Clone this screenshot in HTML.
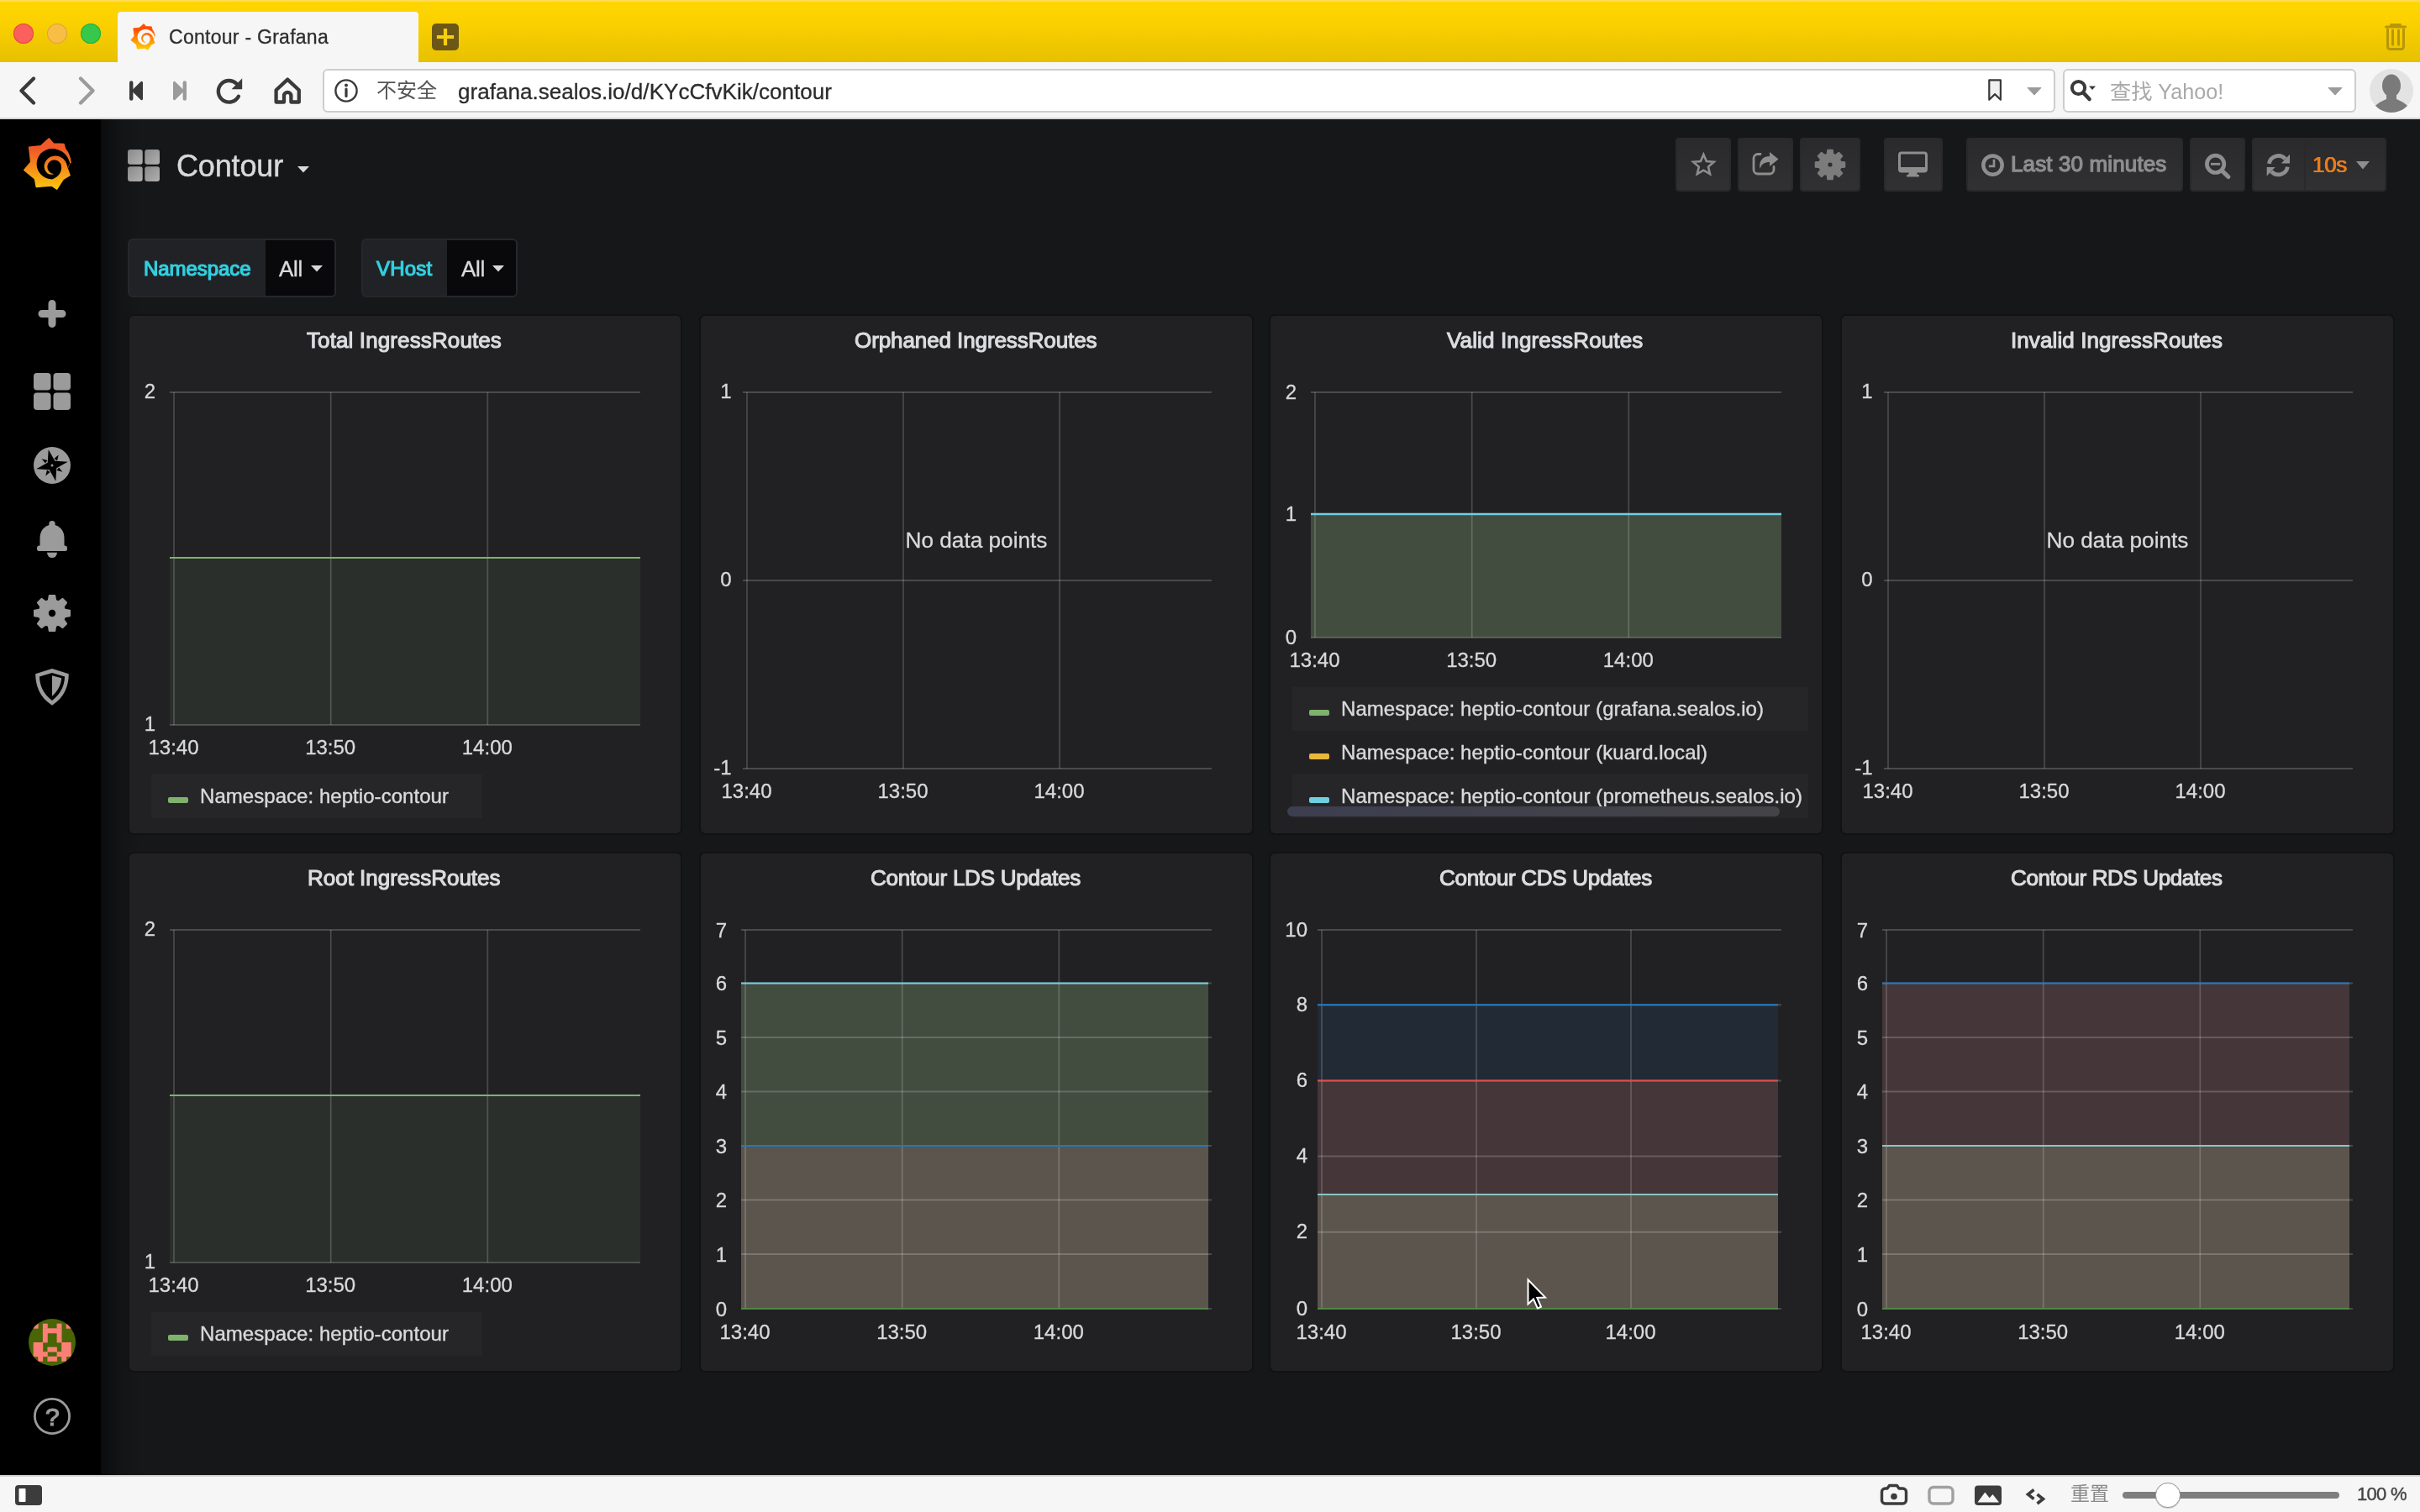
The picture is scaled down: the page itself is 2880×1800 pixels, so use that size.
<!DOCTYPE html><html lang="en"><head><meta charset="utf-8"><meta name="viewport" content="width=2880"><title>Contour - Grafana</title><style>
*{box-sizing:border-box}
html,body{margin:0;padding:0}
body{width:2880px;height:1800px;overflow:hidden;background:#161719;font-family:"Liberation Sans","Noto Sans CJK SC",sans-serif;position:relative}
.t{position:absolute;line-height:1;white-space:pre;will-change:transform}
.abs{position:absolute}
#tabbar{position:absolute;left:0;top:0;width:2880px;height:74px;background:linear-gradient(#fedc5a 0px,#fedc5a 2px,#ffd501 2.5px,#fad000 28px,#f0c800 52px,#e7c000 74px)}
.tl{position:absolute;top:28px;width:24px;height:24px;border-radius:50%}
#tab{position:absolute;left:140px;top:14px;width:358px;height:60px;background:#f6f6f6;border-radius:4px 4px 0 0}
#newtab{position:absolute;left:514px;top:28px;width:32px;height:32px;border-radius:5px;background:#6d5716}
#toolbar{position:absolute;left:0;top:74px;width:2880px;height:68px;background:#f6f6f6;border-bottom:2px solid #d4d4d4}
.field{position:absolute;top:8px;height:52px;background:#fff;border:2px solid #cdcdcd;border-radius:6px}
#side{position:absolute;left:0;top:142px;width:120px;height:1614px;background:#000}
#main{position:absolute;left:120px;top:142px;width:2760px;height:1614px;background:linear-gradient(90deg,#0b0c0d 0px,#131416 24px,#161719 48px)}
#status{position:absolute;left:0;top:1756px;width:2880px;height:44px;background:#f6f6f6;border-top:2px solid #d2d2d2}
.nb{position:absolute;top:164px;height:64px;border-radius:4px;background:linear-gradient(#2a2a2c,#313133);border:2px solid #29292b}
.var{position:absolute;top:284px;height:70px;border:2px solid #26272b;border-radius:6px;background:#212226;overflow:hidden}
.var .val{position:absolute;top:0;right:0;height:66px;background:#09090b}
.panel{position:absolute;width:656px;height:616px;background:#212124;border-radius:5px;box-shadow:0 0 0 2px #121213}
.panel svg{position:absolute;left:0;top:0;will-change:transform}
.lg{position:absolute;background:#262628}
.sw{position:absolute;width:24px;height:7px;border-radius:2px}
svg text{font-family:"Liberation Sans",sans-serif;stroke:#d8d9da;stroke-width:0.3px}
</style></head><body>
<div id="tabbar">
<div class="tl" style="left:16px;background:#fc605c;box-shadow:inset 0 0 0 1px #e2463f"></div>
<div class="tl" style="left:56px;background:#f7bd45;box-shadow:inset 0 0 0 1px #e0a336"></div>
<div class="tl" style="left:96px;background:#35c84a;box-shadow:inset 0 0 0 1px #2bab3a"></div>
<div id="tab"></div>
<div id="newtab"><svg width="32" height="32" viewBox="0 0 32 32"><path d="M16 5.9v20.2M5.9 16h20.2" stroke="#f5cf12" stroke-width="4.2" fill="none"/></svg></div>
<svg class="abs" style="left:2836px;top:26px" width="30" height="36" viewBox="0 0 30 36"><g fill="none" stroke="#b8960a" stroke-width="3" stroke-linecap="round" stroke-linejoin="round"><path d="M3.5 6h23"/><path d="M9.5 3.5h11"/><path d="M5.5 9v20.5a3 3 0 0 0 3 3h13a3 3 0 0 0 3-3V9"/><path d="M11.5 10v17M18.5 10v17"/></g></svg>
</div>
<svg class="abs" style="left:154px;top:28px" width="32" height="32" viewBox="155 236 1041 1041"><defs><linearGradient id="g1" gradientUnits="userSpaceOnUse" x1="0" y1="330" x2="0" y2="1277"><stop offset="0.15" stop-color="#ff4e00"/><stop offset="1" stop-color="#ffd400"/></linearGradient></defs><path fill="url(#g1)" stroke="url(#g1)" stroke-width="24" stroke-linejoin="round" d="M312,425 L545,400 L712,250 L800,352 L1008,360 L1036,460 Q1130,570 1142,730 L1122,738 L1078,850 L1128,985 L995,1065 L868,1262 L762,1192 L458,1220 L428,1058 L214,880 L348,722 Z"/><circle cx="770" cy="760" r="306" fill="#f6f6f6"/><path fill="#f6f6f6" d="M760,455 Q1060,470 1130,745 L1075,860 L960,600 Z"/><path fill="url(#g1)" d="M1074,818 L1072,800 L1068,783 L1064,766 L1058,749 L1051,733 L1043,718 L1034,703 L1024,689 L1013,676 L1002,664 L989,652 L976,642 L963,633 L949,624 L934,617 L919,611 L904,606 L888,602 L873,599 L857,597 L841,597 L826,597 L810,599 L795,601 L780,604 L766,608 L751,613 L738,619 L725,626 L712,634 L700,643 L689,653 L678,663 L668,674 L659,685 L651,696 L643,709 L636,721 L630,734 L625,748 L621,762 L618,776 L616,790 L615,804 L615,818 L617,832 L620,846 L623,859 L628,872 L634,885 L640,897 L647,909 L655,920 L663,930 L673,940 L683,949 L694,955 L707,960 L720,964 L732,967 L745,968 L757,969 L769,969 L781,968 L792,965 L803,963 L813,959 L813,957 L799,956 L784,953 L770,949 L757,943 L744,936 L732,928 L721,918 L712,907 L703,896 L695,883 L689,870 L684,856 L681,842 L679,828 L679,813 L680,799 L683,784 L687,770 L693,757 L700,744 L708,732 L718,721 L729,712 L740,703 L753,695 L766,689 L780,684 L794,681 L808,679 L823,679 L837,680 L852,683 L866,687 L879,693 L892,700 L904,708 L915,718 L924,729 L933,740 L941,753 L947,766 L952,780 L955,794 L957,808Z"/><path fill="url(#g1)" d="M957,800 C966,900 935,1010 761,1073 L900,1062 L1095,905 L1074,790 Z"/></svg>
<span class="t" style="left:200.5px;top:33px;font-size:23px;color:#2d2d2d;-webkit-text-stroke:0.3px #2d2d2d;letter-spacing:0.271px;">Contour - Grafana</span>
<div id="toolbar">
<div class="field" style="left:384px;width:2062px"></div>
<div class="field" style="left:2455px;width:349px"></div>
<svg class="abs" style="left:0;top:0" width="2880" height="66" viewBox="0 74 2880 66">
<path d="M40 93.5 L25.5 108 L40 122.5" fill="none" stroke="#3a3a3a" stroke-width="4.4" stroke-linecap="round" stroke-linejoin="round"/>
<path d="M96 93.5 L110.5 108 L96 122.5" fill="none" stroke="#9b9b9b" stroke-width="4.4" stroke-linecap="round" stroke-linejoin="round"/>
<path d="M156.2 98.5v19" stroke="#3a3a3a" stroke-width="4.4" stroke-linecap="round" fill="none"/><path d="M168.5 98.3 L158.6 108 L168.5 117.7Z" fill="#3a3a3a" stroke="#3a3a3a" stroke-width="3" stroke-linejoin="round"/>
<path d="M219.8 98.5v19" stroke="#9b9b9b" stroke-width="4.4" stroke-linecap="round" fill="none"/><path d="M207.5 98.3 L217.4 108 L207.5 117.7Z" fill="#9b9b9b" stroke="#9b9b9b" stroke-width="3" stroke-linejoin="round"/>
<path d="M281.2 99.3 A12.8 12.8 0 1 0 283.9 114.8" fill="none" stroke="#3a3a3a" stroke-width="4.4" stroke-linecap="round"/><path d="M288.2 93.2 V106.3 H275.6z" fill="#3a3a3a"/>
<path d="M328.6 121.5 V107.3 L342.2 94.6 L355.8 107.3 V121.5 H346.4 V114 a4.2 4.2 0 0 0 -8.4 0 V121.5 Z" fill="none" stroke="#3a3a3a" stroke-width="4.3" stroke-linejoin="round"/>
<circle cx="412" cy="108" r="12.6" fill="none" stroke="#3a3a3a" stroke-width="2.4"/><circle cx="412" cy="101.6" r="2" fill="#3a3a3a"/><path d="M412 106v8.5" stroke="#3a3a3a" stroke-width="3.2" stroke-linecap="round"/>
<path d="M2367.3 95.3 h13.6 v23.4 l-6.8 -6.6 l-6.8 6.6z" fill="#f0f0f0" stroke="#3a3a3a" stroke-width="2.2" stroke-linejoin="round"/>
<path d="M2413 104.5 h16 l-8 8.5z" fill="#9b9b9b" stroke="#9b9b9b" stroke-width="1" stroke-linejoin="round"/>
<path d="M2771 104.5 h16 l-8 8.5z" fill="#9b9b9b" stroke="#9b9b9b" stroke-width="1" stroke-linejoin="round"/>
<circle cx="2473.5" cy="104.5" r="7.6" fill="none" stroke="#3a3a3a" stroke-width="4"/><path d="M2479.5 110.5 L2486.5 118" stroke="#3a3a3a" stroke-width="4.6" stroke-linecap="round"/><path d="M2486 102.5h8l-4 4.5z" fill="#3a3a3a"/>
<circle cx="2846" cy="108" r="26" fill="#e3e3e3"/><clipPath id="avc"><circle cx="2846" cy="108" r="26"/></clipPath><g clip-path="url(#avc)" fill="#7a7a7a"><ellipse cx="2846" cy="102" rx="11" ry="13.5"/><path d="M2840 110h12v8h-12z"/><path d="M2822 136 c2 -12 12 -15 18 -18 h12 c6 3 16 6 18 18z"/></g>
</svg>
</div>
<span class="t cjk" style="left:448px;top:96px;font-size:24px;color:#555;">不安全</span>
<span class="t" style="left:545px;top:96px;font-size:26px;color:#2b2b2b;-webkit-text-stroke:0.3px #2b2b2b;letter-spacing:0.035px;">grafana.sealos.io/d/KYcCfvKik/contour</span>
<span class="t cjk" style="left:2511px;top:97.3px;font-size:25.2px;color:#a9a9a9;">查找 Yahoo!</span>
<div id="side"></div><div id="main"></div>
<svg class="abs" style="left:16px;top:150px" width="90" height="90" viewBox="0 0 1512 1512"><defs><linearGradient id="g2" gradientUnits="userSpaceOnUse" x1="0" y1="330" x2="0" y2="1277"><stop offset="0.15" stop-color="#f05a28"/><stop offset="1" stop-color="#fbca0a"/></linearGradient></defs><path fill="url(#g2)" stroke="url(#g2)" stroke-width="24" stroke-linejoin="round" d="M312,425 L545,400 L712,250 L800,352 L1008,360 L1036,460 Q1130,570 1142,730 L1122,738 L1078,850 L1128,985 L995,1065 L868,1262 L762,1192 L458,1220 L428,1058 L214,880 L348,722 Z"/><circle cx="770" cy="760" r="306" fill="#000"/><path fill="#000" d="M760,455 Q1060,470 1130,745 L1075,860 L960,600 Z"/><path fill="url(#g2)" d="M1074,818 L1072,800 L1068,783 L1064,766 L1058,749 L1051,733 L1043,718 L1034,703 L1024,689 L1013,676 L1002,664 L989,652 L976,642 L963,633 L949,624 L934,617 L919,611 L904,606 L888,602 L873,599 L857,597 L841,597 L826,597 L810,599 L795,601 L780,604 L766,608 L751,613 L738,619 L725,626 L712,634 L700,643 L689,653 L678,663 L668,674 L659,685 L651,696 L643,709 L636,721 L630,734 L625,748 L621,762 L618,776 L616,790 L615,804 L615,818 L617,832 L620,846 L623,859 L628,872 L634,885 L640,897 L647,909 L655,920 L663,930 L673,940 L683,949 L694,955 L707,960 L720,964 L732,967 L745,968 L757,969 L769,969 L781,968 L792,965 L803,963 L813,959 L813,957 L799,956 L784,953 L770,949 L757,943 L744,936 L732,928 L721,918 L712,907 L703,896 L695,883 L689,870 L684,856 L681,842 L679,828 L679,813 L680,799 L683,784 L687,770 L693,757 L700,744 L708,732 L718,721 L729,712 L740,703 L753,695 L766,689 L780,684 L794,681 L808,679 L823,679 L837,680 L852,683 L866,687 L879,693 L892,700 L904,708 L915,718 L924,729 L933,740 L941,753 L947,766 L952,780 L955,794 L957,808Z"/><path fill="url(#g2)" d="M957,800 C966,900 935,1010 761,1073 L900,1062 L1095,905 L1074,790 Z"/></svg>
<svg class="abs" style="left:0;top:340px" width="120" height="520" viewBox="0 340 120 520">
<path d="M62 361.5v24M50 373.5h24" stroke="#9b9b9b" stroke-width="9" stroke-linecap="round" fill="none"/>
<rect x="40" y="444" width="20.5" height="20.5" rx="4" fill="#9b9b9b"/>
<rect x="63.5" y="444" width="20.5" height="20.5" rx="4" fill="#9b9b9b"/>
<rect x="40" y="467.5" width="20.5" height="20.5" rx="4" fill="#9b9b9b"/>
<rect x="63.5" y="467.5" width="20.5" height="20.5" rx="4" fill="#9b9b9b"/>
<circle cx="62" cy="554" r="22" fill="#9b9b9b"/><path d="M57.7 535.2 L65.3 548.7 L80.8 549.7 L67.3 557.3 L66.3 572.8 L58.7 559.3 L43.2 558.3 L56.7 550.7Z M69.7 541.6 L64.4 546 L68.1 548.4Z M74.4 561.7 L70 556.4 L67.6 560.1Z M54.3 566.4 L59.6 562 L55.9 559.6Z M49.6 546.3 L54 551.6 L56.4 547.9Z" fill="#000"/><circle cx="62" cy="554" r="1.5" fill="#9b9b9b"/>
<circle cx="62" cy="623.7" r="3.7" fill="#9b9b9b"/><path d="M47.5 652 V641 C47.5 632 52 626 62 624.3 C72 626 76.5 632 76.5 641 V652Z" fill="#9b9b9b"/><rect x="44" y="649.6" width="36" height="6.5" rx="3.2" fill="#9b9b9b"/><path d="M56 657.7 h12 a6 6.3 0 0 1 -12 0z" fill="#9b9b9b"/>
<path d="M57.8 715 L58.8 709 L65.2 709 L66.2 715 L69.7 716.4 L74.6 712.9 L79.1 717.4 L75.6 722.3 L77 725.8 L83 726.8 L83 733.2 L77 734.2 L75.6 737.7 L79.1 742.6 L74.6 747.1 L69.7 743.6 L66.2 745 L65.2 751 L58.8 751 L57.8 745 L54.3 743.6 L49.4 747.1 L44.9 742.6 L48.4 737.7 L47 734.2 L41 733.2 L41 726.8 L47 725.8 L48.4 722.3 L44.9 717.4 L49.4 712.9 L54.3 716.4Z M67.2 730 a5.2 5.2 0 1 0 -10.4 0 a5.2 5.2 0 1 0 10.4 0Z" fill="#9b9b9b" fill-rule="evenodd" stroke="#9b9b9b" stroke-width="2" stroke-linejoin="round"/>
<path fill-rule="evenodd" fill="#9b9b9b" d="M62 796.1 L81.8 802.3 C81.8 816 77 830 62 839.7 C47 830 42.2 816 42.2 802.3Z M62 801 L46.9 805.6 C47.5 816 51 826 62 833.9 C73 826 76.5 816 77.1 805.6Z"/><path fill="#9b9b9b" d="M62 804.2 L73.2 807.3 C72.5 815 69.5 822 62 828.8Z"/>
</svg>
<svg class="abs" style="left:34px;top:1570px" width="56" height="56" viewBox="0 0 56 56"><defs><clipPath id="idc"><circle cx="28" cy="28" r="28"/></clipPath></defs><g clip-path="url(#idc)"><rect width="56" height="56" fill="#496505"/><g fill="#fd8078">
<rect x="5.7" y="5.7" width="5.88" height="5.98"/>
<rect x="16.86" y="5.7" width="5.88" height="5.98"/>
<rect x="33.6" y="5.7" width="5.88" height="5.98"/>
<rect x="44.76" y="5.7" width="5.88" height="5.98"/>
<rect x="16.86" y="11.28" width="22.62" height="5.98"/>
<rect x="16.86" y="16.86" width="5.88" height="5.98"/>
<rect x="33.6" y="16.86" width="5.88" height="5.98"/>
<rect x="16.86" y="22.44" width="5.88" height="5.98"/>
<rect x="33.6" y="22.44" width="5.88" height="5.98"/>
<rect x="5.7" y="28.02" width="11.46" height="5.98"/>
<rect x="39.18" y="28.02" width="11.46" height="5.98"/>
<rect x="5.7" y="33.6" width="11.46" height="5.98"/>
<rect x="22.44" y="33.6" width="11.46" height="5.98"/>
<rect x="39.18" y="33.6" width="11.46" height="5.98"/>
<rect x="5.7" y="39.18" width="17.04" height="5.98"/>
<rect x="33.6" y="39.18" width="17.04" height="5.98"/>
<rect x="11.28" y="44.76" width="5.88" height="5.98"/>
<rect x="22.44" y="44.76" width="11.46" height="5.98"/>
<rect x="39.18" y="44.76" width="5.88" height="5.98"/>
</g></g></svg>
<svg class="abs" style="left:38px;top:1662px" width="48" height="48" viewBox="0 0 48 48"><circle cx="24" cy="24" r="20.6" fill="none" stroke="#9b9b9b" stroke-width="2.8"/></svg>
<span class="t" style="left:53.7px;top:1672px;font-size:30px;color:#9b9b9b;-webkit-text-stroke:1.2px #9b9b9b;">?</span>
<svg class="abs" style="left:152px;top:178px" width="38" height="38" viewBox="0 0 38 38"><defs><linearGradient id="gg" x1="0" y1="0" x2="1" y2="1"><stop offset="0" stop-color="#8a8a8a"/><stop offset="1" stop-color="#b0b0b0"/></linearGradient></defs><rect x="0" y="0" width="17.7" height="17.7" rx="3" fill="url(#gg)"/><rect x="20.3" y="0" width="17.7" height="17.7" rx="3" fill="url(#gg)"/><rect x="0" y="20.3" width="17.7" height="17.7" rx="3" fill="url(#gg)"/><rect x="20.3" y="20.3" width="17.7" height="17.7" rx="3" fill="url(#gg)"/></svg>
<span class="t" style="left:210px;top:180px;font-size:36px;color:#d8d9da;-webkit-text-stroke:0.5px #d8d9da;letter-spacing:-0.155px;">Contour</span>
<svg class="abs" style="left:354px;top:198px" width="14" height="8"><path d="M0 0h14l-7 7.5z" fill="#d8d9da"/></svg>
<div class="nb" style="left:1994px;width:66px"></div>
<div class="nb" style="left:2068px;width:66px"></div>
<div class="nb" style="left:2142px;width:72px"></div>
<div class="nb" style="left:2242px;width:70px"></div>
<div class="nb" style="left:2340px;width:258px"></div>
<div class="nb" style="left:2606px;width:66px"></div>
<div class="nb" style="left:2680px;width:160px"></div>
<div class="abs" style="left:2742px;top:166px;width:2px;height:60px;background:#29292b"></div>
<svg class="abs" style="left:1990px;top:160px" width="860" height="72" viewBox="1990 160 860 72">
<path d="M2027.4 183.9 L2030.9 192 L2039.7 192.8 L2033 198.6 L2035 207.2 L2027.4 202.7 L2019.8 207.2 L2021.8 198.6 L2015.1 192.8 L2023.9 192Z" fill="none" stroke="#8e8e8e" stroke-width="2.6" stroke-linejoin="miter"/>
<path d="M2095 183.5 h-3 a5 5 0 0 0 -5 5 v13.5 a5 5 0 0 0 5 5 h14 a5 5 0 0 0 5 -5 v-3.5" fill="none" stroke="#8e8e8e" stroke-width="2.8" stroke-linecap="round"/><path d="M2106 181 l10.5 8.5 l-10.5 8.5 v-5 c-6 0 -9.5 2 -11.5 8 c-1.5 -9 3 -15 11.5 -15z" fill="#8e8e8e"/>
<path d="M2174.7 183.6 L2175.2 178.7 L2180.8 178.7 L2181.3 183.6 L2184.4 184.9 L2188.2 181.8 L2192.2 185.8 L2189.1 189.6 L2190.4 192.7 L2195.3 193.2 L2195.3 198.8 L2190.4 199.3 L2189.1 202.4 L2192.2 206.2 L2188.2 210.2 L2184.4 207.1 L2181.3 208.4 L2180.8 213.3 L2175.2 213.3 L2174.7 208.4 L2171.6 207.1 L2167.8 210.2 L2163.8 206.2 L2166.9 202.4 L2165.6 199.3 L2160.7 198.8 L2160.7 193.2 L2165.6 192.7 L2166.9 189.6 L2163.8 185.8 L2167.8 181.8 L2171.6 184.9Z M2181.6 196 a3.6 3.6 0 1 0 -7.2 0 a3.6 3.6 0 1 0 7.2 0Z" fill="#7c7c7c" fill-rule="evenodd" stroke="#7c7c7c" stroke-width="2" stroke-linejoin="round"/>
<rect x="2260.5" y="182" width="32" height="22" rx="2.5" fill="none" stroke="#8e8e8e" stroke-width="3"/><rect x="2260" y="199" width="33" height="6" rx="2" fill="#8e8e8e"/><path d="M2272 205 h9 l1.5 4.5 h-12z" fill="#8e8e8e"/><rect x="2269" y="208" width="15" height="2.4" rx="1" fill="#8e8e8e"/>
<circle cx="2371.5" cy="196.6" r="11.2" fill="none" stroke="#8e8e8e" stroke-width="4.5"/><path d="M2373 189.8 v8 h-6.2" fill="none" stroke="#8e8e8e" stroke-width="2.7"/>
<circle cx="2636.6" cy="195.3" r="10.2" fill="none" stroke="#8e8e8e" stroke-width="4.7"/><path d="M2644.8 203.6 L2651.9 210.5" stroke="#8e8e8e" stroke-width="5.2" stroke-linecap="round"/><path d="M2631 195.3 h11.2" stroke="#8e8e8e" stroke-width="2.8"/>
<path d="M2700.4 194.8 A11.2 11.2 0 0 1 2719.7 189.2" fill="none" stroke="#8e8e8e" stroke-width="4.7"/><path d="M2725 183.8 V194.4 H2714.8z" fill="#8e8e8e"/><path d="M2722.4 198.6 A11.2 11.2 0 0 1 2703.1 204.2" fill="none" stroke="#8e8e8e" stroke-width="4.7"/><path d="M2697.7 209.6 V199 H2707.7z" fill="#8e8e8e"/>
<path d="M2804 192 h16 l-8 9.5z" fill="#8e8e8e"/>
</svg>
<span class="t" style="left:2393.3px;top:182px;font-size:26px;color:#8e8e8e;-webkit-text-stroke:1.25px #8e8e8e;letter-spacing:0.13px;">Last 30 minutes</span>
<span class="t" style="left:2752px;top:183px;font-size:26px;color:#eb7b18;letter-spacing:-0.307px;text-shadow:0.5px 0 0 #eb7b18,-0.5px 0 0 #eb7b18,0 0.4px 0 #eb7b18;">10s</span>
<div class="var" style="left:152px;width:248px"><div class="val" style="width:82px"></div></div>
<div class="var" style="left:430px;width:186px"><div class="val" style="width:82px"></div></div>
<span class="t" style="left:171px;top:308px;font-size:24px;color:#32d0e0;-webkit-text-stroke:1.2px #32d0e0;letter-spacing:-0.062px;">Namespace</span>
<span class="t" style="left:332px;top:307px;font-size:26px;color:#d8d9da;-webkit-text-stroke:0.4px #d8d9da;letter-spacing:-0.299px;">All</span>
<span class="t" style="left:448px;top:308px;font-size:24px;color:#32d0e0;-webkit-text-stroke:1.2px #32d0e0;letter-spacing:0.229px;">VHost</span>
<span class="t" style="left:549px;top:307px;font-size:26px;color:#d8d9da;-webkit-text-stroke:0.4px #d8d9da;letter-spacing:-0.299px;">All</span>
<svg class="abs" style="left:370px;top:316px" width="14" height="8"><path d="M0 0h14l-7 7.5z" fill="#d8d9da"/></svg>
<svg class="abs" style="left:586px;top:316px" width="14" height="8"><path d="M0 0h14l-7 7.5z" fill="#d8d9da"/></svg>
<div class="panel" style="left:154px;top:376px"><svg width="656" height="616" viewBox="0 0 656 616"><rect x="48" y="288" width="560" height="199" fill="#2a2f2b"/><path d="M48 91H608" stroke="rgba(255,255,255,0.19)" stroke-width="2"/><path d="M48 487H608" stroke="rgba(255,255,255,0.19)" stroke-width="2"/><path d="M53 91V487" stroke="rgba(255,255,255,0.19)" stroke-width="1.7"/><path d="M239.7 91V487" stroke="rgba(255,255,255,0.19)" stroke-width="1.7"/><path d="M426.3 91V487" stroke="rgba(255,255,255,0.19)" stroke-width="1.7"/><path d="M48 288H608" stroke="#7eb26d" stroke-width="2"/><text x="31" y="98" font-size="24" fill="#d8d9da" text-anchor="end">2</text><text x="31" y="494" font-size="24" fill="#d8d9da" text-anchor="end">1</text><text x="52.5" y="522" font-size="24" fill="#d8d9da" text-anchor="middle">13:40</text><text x="239.2" y="522" font-size="24" fill="#d8d9da" text-anchor="middle">13:50</text><text x="425.8" y="522" font-size="24" fill="#d8d9da" text-anchor="middle">14:00</text></svg><span class="t" style="left:211px;top:16px;font-size:26px;color:#dcdddf;-webkit-text-stroke:1.1px #dcdddf;letter-spacing:0.116px;">Total IngressRoutes</span><div class="lg" style="left:26px;top:546px;width:394px;height:52px"></div><div class="sw" style="left:46px;top:573px;background:#7eb26d"></div><span class="t" style="left:84.3px;top:560px;font-size:24px;color:#d8d9da;-webkit-text-stroke:0.4px #d8d9da;letter-spacing:0.047px;">Namespace: heptio-contour</span></div>
<div class="panel" style="left:154px;top:1016px"><svg width="656" height="616" viewBox="0 0 656 616"><rect x="48" y="288" width="560" height="199" fill="#2a2f2b"/><path d="M48 91H608" stroke="rgba(255,255,255,0.19)" stroke-width="2"/><path d="M48 487H608" stroke="rgba(255,255,255,0.19)" stroke-width="2"/><path d="M53 91V487" stroke="rgba(255,255,255,0.19)" stroke-width="1.7"/><path d="M239.7 91V487" stroke="rgba(255,255,255,0.19)" stroke-width="1.7"/><path d="M426.3 91V487" stroke="rgba(255,255,255,0.19)" stroke-width="1.7"/><path d="M48 288H608" stroke="#7eb26d" stroke-width="2"/><text x="31" y="98" font-size="24" fill="#d8d9da" text-anchor="end">2</text><text x="31" y="494" font-size="24" fill="#d8d9da" text-anchor="end">1</text><text x="52.5" y="522" font-size="24" fill="#d8d9da" text-anchor="middle">13:40</text><text x="239.2" y="522" font-size="24" fill="#d8d9da" text-anchor="middle">13:50</text><text x="425.8" y="522" font-size="24" fill="#d8d9da" text-anchor="middle">14:00</text></svg><span class="t" style="left:212.2px;top:16px;font-size:26px;color:#dcdddf;-webkit-text-stroke:1.1px #dcdddf;letter-spacing:-0.016px;">Root IngressRoutes</span><div class="lg" style="left:26px;top:546px;width:394px;height:52px"></div><div class="sw" style="left:46px;top:573px;background:#7eb26d"></div><span class="t" style="left:84.3px;top:560px;font-size:24px;color:#d8d9da;-webkit-text-stroke:0.4px #d8d9da;letter-spacing:0.047px;">Namespace: heptio-contour</span></div>
<div class="panel" style="left:834px;top:376px"><svg width="656" height="616" viewBox="0 0 656 616"><path d="M50 91H608" stroke="rgba(255,255,255,0.19)" stroke-width="2"/><path d="M50 315H608" stroke="rgba(255,255,255,0.19)" stroke-width="2"/><path d="M50 539H608" stroke="rgba(255,255,255,0.19)" stroke-width="2"/><path d="M55 91V539" stroke="rgba(255,255,255,0.19)" stroke-width="1.7"/><path d="M241 91V539" stroke="rgba(255,255,255,0.19)" stroke-width="1.7"/><path d="M427 91V539" stroke="rgba(255,255,255,0.19)" stroke-width="1.7"/><text x="36.5" y="98" font-size="24" fill="#d8d9da" text-anchor="end">1</text><text x="36.5" y="322" font-size="24" fill="#d8d9da" text-anchor="end">0</text><text x="36.5" y="546" font-size="24" fill="#d8d9da" text-anchor="end">-1</text><text x="54.5" y="574" font-size="24" fill="#d8d9da" text-anchor="middle">13:40</text><text x="240.5" y="574" font-size="24" fill="#d8d9da" text-anchor="middle">13:50</text><text x="426.5" y="574" font-size="24" fill="#d8d9da" text-anchor="middle">14:00</text><text x="328" y="276" font-size="26.2" fill="#d8d9da" text-anchor="middle">No data points</text></svg><span class="t" style="left:182.8px;top:16px;font-size:26px;color:#dcdddf;-webkit-text-stroke:1.1px #dcdddf;letter-spacing:-0.092px;">Orphaned IngressRoutes</span></div>
<div class="panel" style="left:2192px;top:376px"><svg width="656" height="616" viewBox="0 0 656 616"><path d="M50 91H608" stroke="rgba(255,255,255,0.19)" stroke-width="2"/><path d="M50 315H608" stroke="rgba(255,255,255,0.19)" stroke-width="2"/><path d="M50 539H608" stroke="rgba(255,255,255,0.19)" stroke-width="2"/><path d="M55 91V539" stroke="rgba(255,255,255,0.19)" stroke-width="1.7"/><path d="M241 91V539" stroke="rgba(255,255,255,0.19)" stroke-width="1.7"/><path d="M427 91V539" stroke="rgba(255,255,255,0.19)" stroke-width="1.7"/><text x="36.5" y="98" font-size="24" fill="#d8d9da" text-anchor="end">1</text><text x="36.5" y="322" font-size="24" fill="#d8d9da" text-anchor="end">0</text><text x="36.5" y="546" font-size="24" fill="#d8d9da" text-anchor="end">-1</text><text x="54.5" y="574" font-size="24" fill="#d8d9da" text-anchor="middle">13:40</text><text x="240.5" y="574" font-size="24" fill="#d8d9da" text-anchor="middle">13:50</text><text x="426.5" y="574" font-size="24" fill="#d8d9da" text-anchor="middle">14:00</text><text x="328" y="276" font-size="26.2" fill="#d8d9da" text-anchor="middle">No data points</text></svg><span class="t" style="left:201px;top:16px;font-size:26px;color:#dcdddf;-webkit-text-stroke:1.1px #dcdddf;letter-spacing:0.094px;">Invalid IngressRoutes</span></div>
<div class="panel" style="left:1512px;top:376px"><svg width="656" height="616" viewBox="0 0 656 616"><rect x="48" y="236" width="560" height="147" fill="#424c3f"/><path d="M48 91H608" stroke="rgba(255,255,255,0.19)" stroke-width="2"/><path d="M48 236H608" stroke="rgba(255,255,255,0.19)" stroke-width="2"/><path d="M48 383H608" stroke="rgba(255,255,255,0.19)" stroke-width="2"/><path d="M53 91V383" stroke="rgba(255,255,255,0.19)" stroke-width="1.7"/><path d="M239.7 91V383" stroke="rgba(255,255,255,0.19)" stroke-width="1.7"/><path d="M426.3 91V383" stroke="rgba(255,255,255,0.19)" stroke-width="1.7"/><path d="M48 236H608" stroke="#6ed0e0" stroke-width="2.4"/><text x="31" y="99" font-size="24" fill="#d8d9da" text-anchor="end">2</text><text x="31" y="244" font-size="24" fill="#d8d9da" text-anchor="end">1</text><text x="31" y="391" font-size="24" fill="#d8d9da" text-anchor="end">0</text><text x="52.5" y="418" font-size="24" fill="#d8d9da" text-anchor="middle">13:40</text><text x="239.2" y="418" font-size="24" fill="#d8d9da" text-anchor="middle">13:50</text><text x="425.8" y="418" font-size="24" fill="#d8d9da" text-anchor="middle">14:00</text></svg><span class="t" style="left:210.2px;top:16px;font-size:26px;color:#dcdddf;-webkit-text-stroke:1.1px #dcdddf;letter-spacing:0.144px;">Valid IngressRoutes</span><div class="lg" style="left:26px;top:442px;width:614px;height:52px"></div><div class="sw" style="left:46px;top:469px;background:#7eb26d"></div><span class="t" style="left:84.3px;top:456px;font-size:24px;color:#d8d9da;-webkit-text-stroke:0.4px #d8d9da;letter-spacing:0.061px;">Namespace: heptio-contour (grafana.sealos.io)</span><div class="sw" style="left:46px;top:521px;background:#eab839"></div><span class="t" style="left:84.3px;top:508px;font-size:24px;color:#d8d9da;-webkit-text-stroke:0.4px #d8d9da;letter-spacing:0.063px;">Namespace: heptio-contour (kuard.local)</span><div class="lg" style="left:26px;top:546px;width:614px;height:52px"></div><div class="sw" style="left:46px;top:573px;background:#6ed0e0"></div><span class="t" style="left:84.3px;top:560px;font-size:24px;color:#d8d9da;-webkit-text-stroke:0.4px #d8d9da;letter-spacing:0.071px;">Namespace: heptio-contour (prometheus.sealos.io)</span><div class="abs" style="left:20px;top:584px;width:586px;height:12px;border-radius:6px;background:linear-gradient(90deg,#3d3e50,#444447)"></div></div>
<div class="panel" style="left:834px;top:1016px"><svg width="656" height="616" viewBox="0 0 656 616"><rect x="48" y="154.5" width="556" height="193.5" fill="#424c3f"/><rect x="48" y="348" width="556" height="194" fill="#5c554d"/><path d="M48 91H608" stroke="rgba(255,255,255,0.19)" stroke-width="2"/><path d="M48 154.5H608" stroke="rgba(255,255,255,0.19)" stroke-width="2"/><path d="M48 219H608" stroke="rgba(255,255,255,0.19)" stroke-width="2"/><path d="M48 283.5H608" stroke="rgba(255,255,255,0.19)" stroke-width="2"/><path d="M48 348H608" stroke="rgba(255,255,255,0.19)" stroke-width="2"/><path d="M48 412.5H608" stroke="rgba(255,255,255,0.19)" stroke-width="2"/><path d="M48 477H608" stroke="rgba(255,255,255,0.19)" stroke-width="2"/><path d="M48 542H608" stroke="rgba(255,255,255,0.19)" stroke-width="2"/><path d="M53 91V542" stroke="rgba(255,255,255,0.19)" stroke-width="1.7"/><path d="M239.7 91V542" stroke="rgba(255,255,255,0.19)" stroke-width="1.7"/><path d="M426.3 91V542" stroke="rgba(255,255,255,0.19)" stroke-width="1.7"/><path d="M48 542H604" stroke="#508642" stroke-width="2.2"/><path d="M48 348H604" stroke="#1f78c1" stroke-width="2"/><path d="M48 154.5H604" stroke="#73d1de" stroke-width="2"/><text x="31" y="99.5" font-size="24" fill="#d8d9da" text-anchor="end">7</text><text x="31" y="163" font-size="24" fill="#d8d9da" text-anchor="end">6</text><text x="31" y="227.5" font-size="24" fill="#d8d9da" text-anchor="end">5</text><text x="31" y="292" font-size="24" fill="#d8d9da" text-anchor="end">4</text><text x="31" y="356.5" font-size="24" fill="#d8d9da" text-anchor="end">3</text><text x="31" y="421" font-size="24" fill="#d8d9da" text-anchor="end">2</text><text x="31" y="485.5" font-size="24" fill="#d8d9da" text-anchor="end">1</text><text x="31" y="550.5" font-size="24" fill="#d8d9da" text-anchor="end">0</text><text x="52.5" y="578" font-size="24" fill="#d8d9da" text-anchor="middle">13:40</text><text x="239.2" y="578" font-size="24" fill="#d8d9da" text-anchor="middle">13:50</text><text x="425.8" y="578" font-size="24" fill="#d8d9da" text-anchor="middle">14:00</text></svg><span class="t" style="left:202px;top:16px;font-size:26px;color:#dcdddf;-webkit-text-stroke:1.1px #dcdddf;letter-spacing:-0.23px;">Contour LDS Updates</span></div>
<div class="panel" style="left:1512px;top:1016px"><svg width="656" height="616" viewBox="0 0 656 616"><rect x="56" y="180.2" width="548" height="90.19999999999999" fill="#222a35"/><rect x="56" y="270.4" width="548" height="135.5" fill="#443639"/><rect x="56" y="405.9" width="548" height="136.10000000000002" fill="#5c554d"/><path d="M56 91H608" stroke="rgba(255,255,255,0.19)" stroke-width="2"/><path d="M56 180.2H608" stroke="rgba(255,255,255,0.19)" stroke-width="2"/><path d="M56 270.4H608" stroke="rgba(255,255,255,0.19)" stroke-width="2"/><path d="M56 360.6H608" stroke="rgba(255,255,255,0.19)" stroke-width="2"/><path d="M56 450.8H608" stroke="rgba(255,255,255,0.19)" stroke-width="2"/><path d="M56 542H608" stroke="rgba(255,255,255,0.19)" stroke-width="2"/><path d="M61 91V542" stroke="rgba(255,255,255,0.19)" stroke-width="1.7"/><path d="M245 91V542" stroke="rgba(255,255,255,0.19)" stroke-width="1.7"/><path d="M429 91V542" stroke="rgba(255,255,255,0.19)" stroke-width="1.7"/><path d="M56 542H604" stroke="#508642" stroke-width="2.2"/><path d="M56 405.9H604" stroke="#8cc4c6" stroke-width="2"/><path d="M56 270.4H604" stroke="#dc504a" stroke-width="2"/><path d="M56 180.2H604" stroke="#2279c2" stroke-width="2"/><text x="44" y="98.5" font-size="24" fill="#d8d9da" text-anchor="end">10</text><text x="44" y="187.7" font-size="24" fill="#d8d9da" text-anchor="end">8</text><text x="44" y="277.9" font-size="24" fill="#d8d9da" text-anchor="end">6</text><text x="44" y="368.1" font-size="24" fill="#d8d9da" text-anchor="end">4</text><text x="44" y="458.3" font-size="24" fill="#d8d9da" text-anchor="end">2</text><text x="44" y="549.5" font-size="24" fill="#d8d9da" text-anchor="end">0</text><text x="60.5" y="578" font-size="24" fill="#d8d9da" text-anchor="middle">13:40</text><text x="244.5" y="578" font-size="24" fill="#d8d9da" text-anchor="middle">13:50</text><text x="428.5" y="578" font-size="24" fill="#d8d9da" text-anchor="middle">14:00</text></svg><span class="t" style="left:200.5px;top:16px;font-size:26px;color:#dcdddf;-webkit-text-stroke:1.1px #dcdddf;letter-spacing:-0.3px;">Contour CDS Updates</span></div>
<div class="panel" style="left:2192px;top:1016px"><svg width="656" height="616" viewBox="0 0 656 616"><rect x="48" y="154.5" width="556" height="193.5" fill="#443639"/><rect x="48" y="348" width="556" height="194" fill="#5c554d"/><path d="M48 91H608" stroke="rgba(255,255,255,0.19)" stroke-width="2"/><path d="M48 154.5H608" stroke="rgba(255,255,255,0.19)" stroke-width="2"/><path d="M48 219H608" stroke="rgba(255,255,255,0.19)" stroke-width="2"/><path d="M48 283.5H608" stroke="rgba(255,255,255,0.19)" stroke-width="2"/><path d="M48 348H608" stroke="rgba(255,255,255,0.19)" stroke-width="2"/><path d="M48 412.5H608" stroke="rgba(255,255,255,0.19)" stroke-width="2"/><path d="M48 477H608" stroke="rgba(255,255,255,0.19)" stroke-width="2"/><path d="M48 542H608" stroke="rgba(255,255,255,0.19)" stroke-width="2"/><path d="M53 91V542" stroke="rgba(255,255,255,0.19)" stroke-width="1.7"/><path d="M239.7 91V542" stroke="rgba(255,255,255,0.19)" stroke-width="1.7"/><path d="M426.3 91V542" stroke="rgba(255,255,255,0.19)" stroke-width="1.7"/><path d="M48 542H604" stroke="#508642" stroke-width="2.2"/><path d="M48 348H604" stroke="#8cc4c6" stroke-width="2"/><path d="M48 154.5H604" stroke="#2279c2" stroke-width="2"/><text x="31" y="99.5" font-size="24" fill="#d8d9da" text-anchor="end">7</text><text x="31" y="163" font-size="24" fill="#d8d9da" text-anchor="end">6</text><text x="31" y="227.5" font-size="24" fill="#d8d9da" text-anchor="end">5</text><text x="31" y="292" font-size="24" fill="#d8d9da" text-anchor="end">4</text><text x="31" y="356.5" font-size="24" fill="#d8d9da" text-anchor="end">3</text><text x="31" y="421" font-size="24" fill="#d8d9da" text-anchor="end">2</text><text x="31" y="485.5" font-size="24" fill="#d8d9da" text-anchor="end">1</text><text x="31" y="550.5" font-size="24" fill="#d8d9da" text-anchor="end">0</text><text x="52.5" y="578" font-size="24" fill="#d8d9da" text-anchor="middle">13:40</text><text x="239.2" y="578" font-size="24" fill="#d8d9da" text-anchor="middle">13:50</text><text x="425.8" y="578" font-size="24" fill="#d8d9da" text-anchor="middle">14:00</text></svg><span class="t" style="left:201.2px;top:16px;font-size:26px;color:#dcdddf;-webkit-text-stroke:1.1px #dcdddf;letter-spacing:-0.378px;">Contour RDS Updates</span></div>
<svg class="abs" style="left:1810px;top:1515px" width="40" height="50" viewBox="1810 1515 40 50"><path d="M1818.5 1523.5 V1552.5 L1825 1546.5 L1829.8 1557.5 L1834 1555.8 L1829.3 1545 L1839 1544.5Z" fill="#000" stroke="#fff" stroke-width="2" stroke-linejoin="miter"/></svg>
<div id="status"></div>
<svg class="abs" style="left:0;top:1758px" width="2880" height="42" viewBox="0 1758 2880 42">
<rect x="18" y="1768" width="32" height="24" rx="4" fill="#3c3c3c"/><rect x="22.5" y="1772" width="8" height="16" rx="1" fill="#fff"/>
<path d="M2246 1772 l2.5 -3.5 h9 l2.5 3.5 h4.5 a4 4 0 0 1 4 4 v10 a4 4 0 0 1 -4 4 h-21 a4 4 0 0 1 -4 -4 v-10 a4 4 0 0 1 4 -4z" fill="none" stroke="#3c3c3c" stroke-width="3.4" stroke-linejoin="round"/><circle cx="2254" cy="1781.5" r="3.8" fill="#3c3c3c"/>
<rect x="2296" y="1770.5" width="28" height="19.5" rx="5" fill="none" stroke="#a0a0a0" stroke-width="3.4"/>
<rect x="2350" y="1768.5" width="32" height="23.5" rx="4" fill="#3c3c3c"/><path d="M2353.5 1788.5 l8.8 -12 l5.4 6.8 l3.8 -4.4 l7.5 9.6z" fill="#f6f6f6"/>
<path d="M2420.5 1773.5 l-7 5.5 l7 5.5 M2424.5 1779 l7 5.5 l-7 5.5" fill="none" stroke="#3c3c3c" stroke-width="3.6"/>
<rect x="2526" y="1776" width="258" height="8" rx="4" fill="#7f7f7f"/><circle cx="2580" cy="1780.5" r="15.4" fill="#000" opacity="0.18"/><circle cx="2580" cy="1780" r="14.6" fill="#fff" stroke="#9a9a9a" stroke-width="1"/>
</svg>
<span class="t cjk" style="left:2464px;top:1767px;font-size:23px;color:#8a8a8a;">重置</span>
<span class="t" style="left:2805px;top:1768px;font-size:22px;color:#444;-webkit-text-stroke:0.4px #444;letter-spacing:-0.676px;">100 %</span>
<script>(function(){var w=window.innerWidth;if(w&&Math.abs(w-2880)>2){document.documentElement.style.zoom=w/2880;}})();</script>
</body></html>
